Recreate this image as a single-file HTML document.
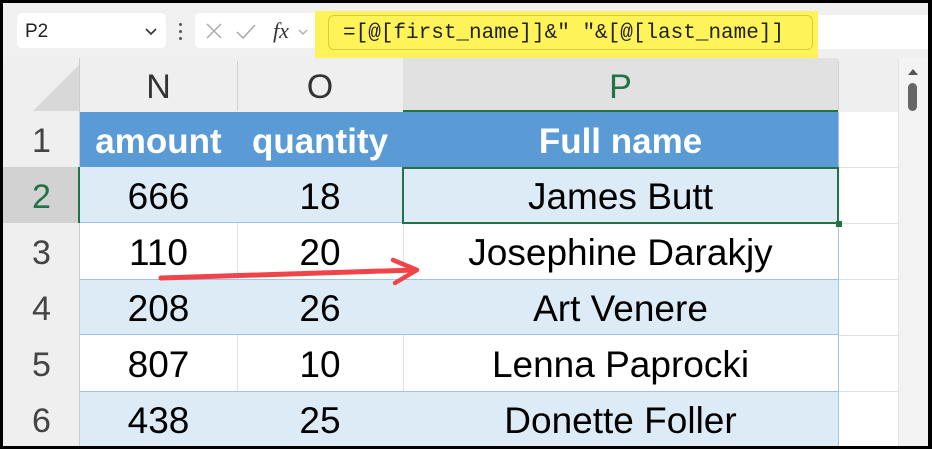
<!DOCTYPE html>
<html><head><style>
*{margin:0;padding:0;box-sizing:border-box}
body{width:932px;height:449px;background:#000;position:relative;overflow:hidden;font-family:"Liberation Sans",sans-serif}
#app{position:absolute;left:3px;top:3px;width:925px;height:443px;background:#f0f0f0;overflow:hidden}
.abs{position:absolute}
.c{position:absolute;display:flex;align-items:center;justify-content:center;font-size:37px;color:#000;padding-top:4px}
.h{font-size:34px !important}
</style></head><body>
<div id="app">
 <div class="abs" style="left:14px;top:10px;width:149px;height:35px;background:#fff;border-radius:5px;font-size:19px;padding:8px 0 0 8px;color:#222">P2</div>
 <svg class="abs" style="left:141px;top:24px" width="14" height="10"><path d="M2 2 L7 7 L12 2" stroke="#333" stroke-width="1.6" fill="none"/></svg>
 <div class="abs" style="left:176px;top:20px;width:3px;height:3px;background:#555;border-radius:2px"></div>
 <div class="abs" style="left:176px;top:27px;width:3px;height:3px;background:#555;border-radius:2px"></div>
 <div class="abs" style="left:176px;top:34px;width:3px;height:3px;background:#555;border-radius:2px"></div>
 <div class="abs" style="left:192px;top:10px;width:130px;height:35px;background:#fff;border-radius:5px"></div>
 <svg class="abs" style="left:200px;top:18px" width="110" height="22">
  <path d="M4 3 L18 17 M18 3 L4 17" stroke="#aaa" stroke-width="1.5"/>
  <path d="M34 11 L40 17 L52 4" stroke="#aaa" stroke-width="1.5" fill="none"/>
  <text x="70" y="17" font-family="Liberation Serif" font-style="italic" font-size="22" fill="#333">fx</text>
  <path d="M96 9 L100 13 L104 9" stroke="#aaa" stroke-width="1.3" fill="none"/>
 </svg>
 <div class="abs" style="left:312px;top:8px;width:503px;height:48px;background:#fff35a"></div>
 <div class="abs" style="left:325px;top:12px;width:485px;height:35px;border:1px solid #d8cc40;border-radius:6px;background:#fff35a;font-family:'Liberation Mono',monospace;font-size:21px;color:#222;padding:6px 0 0 14px;white-space:pre">=[@[first_name]]&amp;" "&amp;[@[last_name]]</div>
 <div class="abs" style="left:815px;top:12px;width:110px;height:34px;background:#fff"></div>
 <div class="abs" style="left:0;top:55px;width:895px;height:390px;background:#fff"></div>
 <div class="abs" style="left:0;top:55px;width:895px;height:54px;background:#efefef"></div>
 <div class="abs" style="left:0;top:55px;width:77px;height:390px;background:#efefef;border-right:1px solid #ccc"></div>
 <svg class="abs" style="left:28px;top:60px" width="50" height="50"><path d="M48 2 L48 48 L2 48 Z" fill="#d8d8d8"/></svg>
 <div class="abs" style="left:400px;top:55px;width:435px;height:54px;background:#e1e1e1;border-bottom:2px solid #217346"></div>
 <div class="abs" style="left:234px;top:58px;width:1px;height:50px;background:#d0d0d0"></div>
 <div class="abs" style="left:835px;top:58px;width:1px;height:50px;background:#d0d0d0"></div>
 <div class="c h" style="left:77px;top:55px;width:157px;height:54px;color:#333">N</div>
 <div class="c h" style="left:234px;top:55px;width:166px;height:54px;color:#333">O</div>
 <div class="c h" style="left:400px;top:55px;width:435px;height:54px;color:#217346">P</div>
 <div class="abs" style="left:77px;top:109px;width:758px;height:55px;background:#5b9bd5"></div>
 <div class="c" style="left:77px;top:109px;width:157px;height:55px;color:#fff;font-weight:bold;font-size:35px">amount</div>
 <div class="c" style="left:234px;top:109px;width:166px;height:55px;color:#fff;font-weight:bold;font-size:35px">quantity</div>
 <div class="c" style="left:400px;top:109px;width:435px;height:55px;color:#fff;font-weight:bold;font-size:35px">Full name</div>
 <div class="abs" style="left:77px;top:164px;width:758px;height:56px;background:#ddebf7;border-bottom:1px solid #9dc3e6"></div>
 <div class="abs" style="left:77px;top:276px;width:758px;height:56px;background:#ddebf7;border-top:1px solid #9dc3e6;border-bottom:1px solid #9dc3e6"></div>
 <div class="abs" style="left:77px;top:388px;width:758px;height:56px;background:#ddebf7;border-top:1px solid #9dc3e6"></div>
 <div class="abs" style="left:835px;top:109px;width:1px;height:336px;background:#9dc3e6"></div>
 <div class="abs" style="left:234px;top:220px;width:1px;height:56px;background:#e0e0e0"></div>
 <div class="abs" style="left:234px;top:332px;width:1px;height:56px;background:#e0e0e0"></div>
 <div class="abs" style="left:400px;top:220px;width:1px;height:56px;background:#e0e0e0"></div>
 <div class="abs" style="left:400px;top:332px;width:1px;height:56px;background:#e0e0e0"></div>
 <div class="abs" style="left:836px;top:164px;width:59px;height:1px;background:#e0e0e0"></div>
 <div class="abs" style="left:836px;top:220px;width:59px;height:1px;background:#e0e0e0"></div>
 <div class="abs" style="left:836px;top:276px;width:59px;height:1px;background:#e0e0e0"></div>
 <div class="abs" style="left:836px;top:332px;width:59px;height:1px;background:#e0e0e0"></div>
 <div class="abs" style="left:836px;top:388px;width:59px;height:1px;background:#e0e0e0"></div>
 <div class="abs" style="left:0;top:164px;width:77px;height:56px;background:#d2d2d2;border-right:2px solid #217346"></div>
 <div class="abs" style="left:399px;top:164px;width:437px;height:57px;border:2px solid #217346"></div>
 <div class="abs" style="left:833px;top:218px;width:6px;height:6px;background:#217346"></div>
 <div class="c h" style="left:0;top:109px;width:77px;height:55px;color:#444">1</div>
 <div class="c h" style="left:0;top:164px;width:77px;height:56px;color:#217346">2</div>
 <div class="c h" style="left:0;top:220px;width:77px;height:56px;color:#444">3</div>
 <div class="c h" style="left:0;top:276px;width:77px;height:56px;color:#444">4</div>
 <div class="c h" style="left:0;top:332px;width:77px;height:56px;color:#444">5</div>
 <div class="c h" style="left:0;top:388px;width:77px;height:56px;color:#444">6</div>
 <div class="c" style="left:77px;top:164px;width:157px;height:56px">666</div>
 <div class="c" style="left:234px;top:164px;width:166px;height:56px">18</div>
 <div class="c" style="left:400px;top:164px;width:435px;height:56px">James Butt</div>
 <div class="c" style="left:77px;top:220px;width:157px;height:56px">110</div>
 <div class="c" style="left:234px;top:220px;width:166px;height:56px">20</div>
 <div class="c" style="left:400px;top:220px;width:435px;height:56px">Josephine Darakjy</div>
 <div class="c" style="left:77px;top:276px;width:157px;height:56px">208</div>
 <div class="c" style="left:234px;top:276px;width:166px;height:56px">26</div>
 <div class="c" style="left:400px;top:276px;width:435px;height:56px">Art Venere</div>
 <div class="c" style="left:77px;top:332px;width:157px;height:56px">807</div>
 <div class="c" style="left:234px;top:332px;width:166px;height:56px">10</div>
 <div class="c" style="left:400px;top:332px;width:435px;height:56px">Lenna Paprocki</div>
 <div class="c" style="left:77px;top:388px;width:157px;height:56px">438</div>
 <div class="c" style="left:234px;top:388px;width:166px;height:56px">25</div>
 <div class="c" style="left:400px;top:388px;width:435px;height:56px">Donette Foller</div>
 <svg class="abs" style="left:150px;top:250px" width="270" height="40"><path d="M8 25 L262 17" stroke="#f04448" stroke-width="5" stroke-linecap="round"/><path d="M240 7 L264 17 L242 30" stroke="#f04448" stroke-width="4.5" fill="none" stroke-linecap="round" stroke-linejoin="round"/></svg>
 <div class="abs" style="left:895px;top:55px;width:30px;height:390px;background:#f3f3f3;border-left:1px solid #e4e4e4"></div>
 <svg class="abs" style="left:903px;top:63px" width="14" height="12"><path d="M2 9 L7 3 L12 9 Z" fill="#555"/></svg>
 <div class="abs" style="left:905px;top:80px;width:9px;height:28px;background:#666;border-radius:5px"></div>
</div>
</body></html>
